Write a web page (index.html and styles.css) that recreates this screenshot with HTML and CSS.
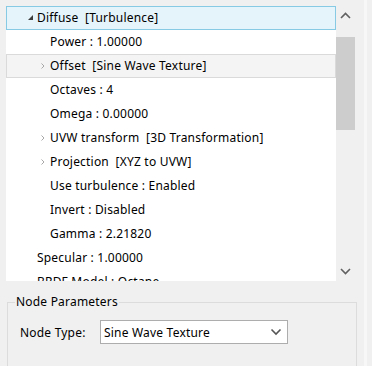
FILE: index.html
```html
<!DOCTYPE html>
<html>
<head>
<meta charset="utf-8">
<link rel="stylesheet" href="styles.css">
</head>
<body>
<div class="panel">
  <div class="treebox">
    <div class="tree">
      <div class="row sel lvl1"><span class="exp"><svg width="13" height="10" viewBox="0 0 13 10"><polygon points="9,2 9,7 4,7" fill="#3c3c3c"/></svg></span><span class="txt">Diffuse  [Turbulence]</span></div>
      <div class="row lvl2"><span class="exp"></span><span class="txt">Power : 1.00000</span></div>
      <div class="row inact lvl2"><span class="exp"><svg width="13" height="10" viewBox="0 0 13 10"><polyline points="4.5,2.5 7,5 4.5,7.5" fill="none" stroke="#a8a8a8" stroke-width="1"/></svg></span><span class="txt">Offset  [Sine Wave Texture]</span></div>
      <div class="row lvl2"><span class="exp"></span><span class="txt">Octaves : 4</span></div>
      <div class="row lvl2"><span class="exp"></span><span class="txt">Omega : 0.00000</span></div>
      <div class="row lvl2"><span class="exp"><svg width="13" height="10" viewBox="0 0 13 10"><polyline points="4.5,2.5 7,5 4.5,7.5" fill="none" stroke="#a8a8a8" stroke-width="1"/></svg></span><span class="txt">UVW transform  [3D Transformation]</span></div>
      <div class="row lvl2"><span class="exp"><svg width="13" height="10" viewBox="0 0 13 10"><polyline points="4.5,2.5 7,5 4.5,7.5" fill="none" stroke="#a8a8a8" stroke-width="1"/></svg></span><span class="txt">Projection  [XYZ to UVW]</span></div>
      <div class="row lvl2"><span class="exp"></span><span class="txt">Use turbulence : Enabled</span></div>
      <div class="row lvl2"><span class="exp"></span><span class="txt">Invert : Disabled</span></div>
      <div class="row lvl2"><span class="exp"></span><span class="txt">Gamma : 2.21820</span></div>
      <div class="row lvl1"><span class="exp"></span><span class="txt">Specular : 1.00000</span></div>
      <div class="row lvl1"><span class="exp"></span><span class="txt">BRDF Model : Octane</span></div>
    </div>
    <div class="scrollbar">
      <div class="arrow"><svg width="19" height="19" viewBox="0 0 19 19"><polyline points="5,12 9.5,7.5 14,12" fill="none" stroke="#606060" stroke-width="1.6"/></svg></div>
      <div class="track"><div class="thumb"></div></div>
      <div class="arrow"><svg width="19" height="19" viewBox="0 0 19 19"><polyline points="5,7 9.5,11.5 14,7" fill="none" stroke="#606060" stroke-width="1.6"/></svg></div>
    </div>
  </div>
  <fieldset class="group">
    <legend>Node Parameters</legend>
    <div class="field">
      <span class="label">Node Type:</span>
      <div class="combo"><span>Sine Wave Texture</span><svg width="12" height="8" viewBox="0 0 12 8"><polyline points="1.5,1.5 6,6 10.5,1.5" fill="none" stroke="#555" stroke-width="1.6"/></svg></div>
    </div>
  </fieldset>
</div>
</body>
</html>
```

FILE: styles.css
```css
html, body {
  margin: 0;
  padding: 0;
}
body {
  background: #f0f0f0;
  font-family: "Noto Sans", "Open Sans", sans-serif;
  font-size: 12px;
  letter-spacing: 0.2px;
  color: #000;
  width: 372px;
  height: 366px;
  overflow: hidden;
}
.panel {
  padding: 6px 0 0 6px;
  border-right: 3px solid #f7f7f7;
  width: 358px;
  height: 360px;
  box-sizing: content-box;
}
.treebox {
  display: flex;
  height: 275px;
}
.tree {
  width: 330px;
  background: #fff;
  overflow: hidden;
}
.row {
  height: 24px;
  box-sizing: border-box;
  border: 1px solid transparent;
  display: flex;
  align-items: center;
  white-space: pre;
}
.row.sel {
  background: #e5f3fb;
  border-color: #86cbe3;
}
.row.inact {
  background: #f4f4f4;
  border-color: #dadada;
}
.lvl1 { padding-left: 17px; }
.lvl2 { padding-left: 30px; }
.exp {
  width: 13px;
  height: 10px;
  display: flex;
  flex: none;
}
.txt {
  line-height: 16px;
}
.scrollbar {
  width: 19px;
  display: flex;
  flex-direction: column;
}
.arrow {
  height: 19px;
  display: flex;
  align-items: center;
  justify-content: center;
}
.arrow svg { display: block; }
.track {
  flex: 1;
  padding-top: 12px;
}
.thumb {
  width: 19px;
  height: 93px;
  background: #cdcdcd;
}
.group {
  margin: 13px 0 0 1px;
  padding: 0;
  width: 350px;
  height: 80px;
  box-sizing: border-box;
  border: 1px solid #dcdcdc;
  min-width: 0;
}
legend {
  margin-left: 7px;
  padding: 0 1px;
  line-height: 16px;
  font-size: 12px;
}
.field {
  display: flex;
  align-items: center;
  margin-top: 10px;
}
.label {
  width: 80px;
  padding-left: 12px;
  box-sizing: content-box;
  flex: none;
}
.combo {
  width: 188px;
  height: 24px;
  box-sizing: border-box;
  border: 1px solid #adadad;
  background: #fff;
  display: flex;
  align-items: center;
  justify-content: space-between;
  padding: 0 5px 0 3px;
}
.combo svg { display: block; }
```
